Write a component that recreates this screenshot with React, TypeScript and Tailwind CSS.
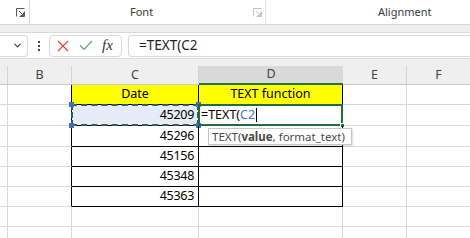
import { ChevronDown } from "lucide-react";

const cols = ["w-[8px]", "w-[64px]", "w-[127px]", "w-[144px]", "w-[64px]", "w-[63px]"];

function Launcher({ faded }: { faded?: boolean }) {
  const c = faded ? "#c4c4c4" : "#5a5a5a";
  return (
    <svg width="9" height="9" viewBox="0 0 9 9">
      <path d="M0.5 8.5V0.5H8.5" fill="none" stroke={c} strokeWidth="1" />
      <path d="M8.5 3.5V8.5H3.5" fill="none" stroke={c} strokeWidth="1" />
      <path d="M3 3L7.5 7.5M7.5 4.5V7.5H4.5" fill="none" stroke={c} strokeWidth="1" />
    </svg>
  );
}

const rows = [
  { h: "h-[20px]", c: "Date", d: "TEXT function", head: true },
  { h: "h-[21px]", c: "45209", d: "", active: true },
  { h: "h-[21px]", c: "45296", d: "" },
  { h: "h-[20px]", c: "45156", d: "" },
  { h: "h-[20px]", c: "45348", d: "" },
  { h: "h-[20px]", c: "45363", d: "" },
  { h: "h-[20px]", c: "", d: "", blank: true },
  { h: "h-[20px]", c: "", d: "", blank: true },
];

export default function App() {
  return (
    <div className="w-[470px] h-[238px] overflow-hidden bg-white font-['Noto_Sans',sans-serif] text-[#262626]">
      {/* ribbon group labels */}
      <div className="flex h-[25px] border-b border-[#d6d6d6] bg-white text-[11px] text-[#3b3b3b]">
        <div className="w-[30px] flex justify-end items-center pr-[4px] border-r border-[#d8d8d8]">
          <Launcher />
        </div>
        <div className="w-[236px] flex items-center border-r border-[#e4e4e4]">
          <span className="ml-[100px]">Font</span>
          <span className="ml-auto mr-[3px] mt-[1px]">
            <Launcher faded />
          </span>
        </div>
        <div className="flex-1 flex items-center">
          <span className="ml-[112px]">Alignment</span>
        </div>
      </div>
      <div className="h-[8px] bg-[#efefef] border-b border-[#d9d9d9]" />

      {/* formula bar */}
      <div className="h-[25px] flex items-center bg-white">
        <div className="w-[28px] h-[22px] flex items-center justify-end pr-[4px] border border-l-0 border-[#d9d9d9] rounded-r-[4px]">
          <ChevronDown size={11} strokeWidth={2.2} color="#333" />
        </div>
        <div className="w-[21px] flex flex-col items-center gap-[2px]">
          <span className="w-[2px] h-[2px] bg-[#444]" />
          <span className="w-[2px] h-[2px] bg-[#444]" />
          <span className="w-[2px] h-[2px] bg-[#444]" />
        </div>
        <div className="w-[73px] h-[22px] flex items-center border border-[#d9d9d9] rounded-[4px]">
          <svg width="12" height="12" viewBox="0 0 12 12" className="ml-[7px]">
            <path d="M1 1L11 11M11 1L1 11" stroke="#e0453d" strokeWidth="1.2" />
          </svg>
          <svg width="14" height="11" viewBox="0 0 14 11" className="ml-[10px]">
            <path d="M1 5.5L5 9.5L13 1" fill="none" stroke="#5fa86a" strokeWidth="1.2" />
          </svg>
          <span className="ml-[9px] font-['Liberation_Serif',serif] italic text-[15px] leading-none text-[#333]">
            fx
          </span>
        </div>
        <div className="ml-[6px] flex-1 h-[22px] flex items-center border border-r-0 border-[#d9d9d9] rounded-l-[4px] pl-[10px] text-[13.5px] text-[#222]">
          =TEXT(C2
        </div>
      </div>

      {/* grid */}
      <div className="border-t border-[#dcdcdc] bg-[#efefef]">
        <div className="h-[7px]" />
        <div className="flex h-[19px] text-[12.5px] text-[#444] border-b border-[#c8c8c8]">
          <div className={`${cols[0]} border-r border-[#d4d4d4]`} />
          <div className={`${cols[1]} flex items-center justify-center border-r border-[#d4d4d4]`}>B</div>
          <div className={`${cols[2]} flex items-center justify-center border-r border-[#d4d4d4]`}>C</div>
          <div className={`${cols[3]} flex items-center justify-center bg-[#d9d9d9] border-b-2 border-[#217346] -mb-[1px]`}>D</div>
          <div className={`${cols[4]} flex items-center justify-center border-r border-[#d4d4d4]`}>E</div>
          <div className={`${cols[5]} flex items-center justify-center`}>F</div>
        </div>
      </div>
      <div className="relative text-[12.5px] text-black">
        {rows.map((r, i) => {
          const inTable = !r.blank;
          const bottomDark = inTable;
          return (
            <div key={i} className={`flex ${r.h}`}>
              <div className={`${cols[0]} border-r border-b border-[#d9d9d9]`} />
              <div
                className={`${cols[1]} border-b border-[#d9d9d9] border-r ${inTable ? "border-r-black" : ""}`}
              />
              <div
                className={`${cols[2]} relative flex items-center border-r border-b ${
                  bottomDark ? "border-black" : "border-[#d9d9d9]"
                } ${r.head ? "bg-[#ffff00] justify-center" : "justify-end pr-[4px] tracking-[-0.3px]"} ${
                  r.active ? "bg-[#e6ecf6]" : ""
                }`}
              >
                {r.c}
                {r.active && (
                  <>
                    <div className="absolute -left-[1px] -top-[1px] -right-[1px] -bottom-[1px] border-2 border-dashed border-[#2f5f63]" />
                    <span className="absolute -left-[3px] -top-[3px] w-[5px] h-[5px] bg-[#4170b8]" />
                    <span className="absolute -right-[3px] -top-[3px] w-[5px] h-[5px] bg-[#4170b8]" />
                    <span className="absolute -left-[3px] -bottom-[3px] w-[5px] h-[5px] bg-[#4170b8]" />
                    <span className="absolute -right-[3px] -bottom-[3px] w-[5px] h-[5px] bg-[#4170b8]" />
                  </>
                )}
              </div>
              <div
                className={`${cols[3]} relative flex items-center border-b border-r ${
                  bottomDark ? "border-black" : "border-[#d9d9d9]"
                } ${r.head ? "bg-[#ffff00] justify-center" : "pl-[2px]"}`}
              >
                {r.d}
                {r.active && (
                  <>
                    <div className="absolute -left-[1px] -top-[1px] -right-[1px] -bottom-[1px] border-2 border-[#236b45]" />
                    <span className="absolute -right-[3px] -bottom-[3px] w-[5px] h-[5px] bg-[#236b45] border border-white" />
                    <span className="relative">
                      =TEXT(<span className="text-[#4472c4]">C2</span>
                      <span className="inline-block w-[1px] h-[14px] bg-black align-middle ml-[1px]" />
                    </span>
                    <div className="absolute left-[9px] top-[23px] z-10 h-[17px] w-[144px] flex items-center bg-white border border-[#c6c6c6] shadow-[1px_1px_2px_rgba(0,0,0,0.15)] pl-[3px] text-[11.5px] text-[#4a4a4a] whitespace-nowrap">
                      TEXT(<b className="font-bold">value</b>, format_text)
                    </div>
                  </>
                )}
              </div>
              <div className={`${cols[4]} border-b border-r border-[#d9d9d9]`} />
              <div className={`${cols[5]} border-b border-[#d9d9d9]`} />
            </div>
          );
        })}
      </div>
    </div>
  );
}
